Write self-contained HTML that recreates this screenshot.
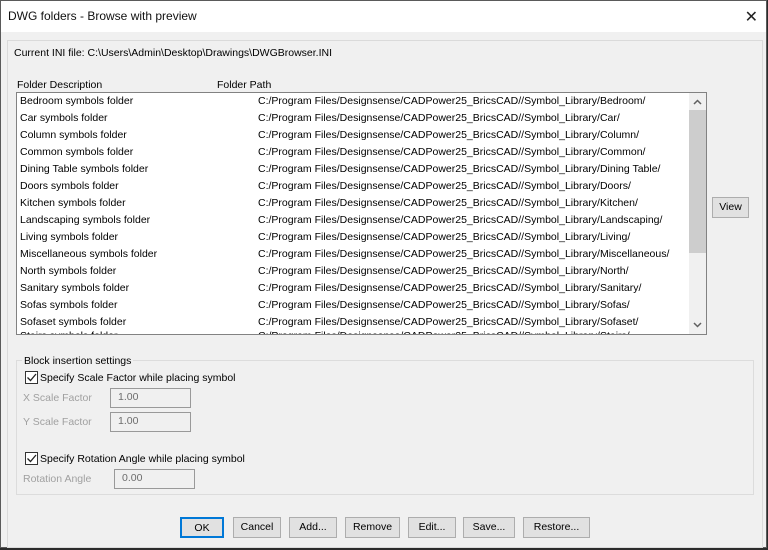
<!DOCTYPE html>
<html><head><style>
*{margin:0;padding:0;box-sizing:border-box}
body{width:768px;height:550px;background:#2b2b2b;font-family:"Liberation Sans",sans-serif;font-size:10.5px;color:#000;position:relative;overflow:hidden}
.win{position:absolute;left:0;top:0;width:767px;height:548px;background:#f0f0f0;border:1px solid #5a5a5a}
.title{position:absolute;left:0;top:0;width:765px;height:31px;background:#fff;font-size:12px;padding:8px 0 0 7px;color:#111}
.x{position:absolute;right:8px;top:6px;font-size:16px;color:#222}
.panel{position:absolute;left:6px;top:39px;width:756px;height:508px;border:1px solid #dadada}
.a{position:absolute;white-space:nowrap}
.list{position:absolute;left:15px;top:91px;width:691px;height:243px;background:#fff;border:1px solid #828282;overflow:hidden}
.row{position:absolute;left:3px;white-space:nowrap}
.row span{position:absolute;left:238px}
.sb{position:absolute;right:0;top:0;width:17px;height:241px;background:#f0f0f0}
.thumb{position:absolute;right:0;top:17px;width:17px;height:143px;background:#cdcdcd}
.btn{position:absolute;top:516px;height:21px;background:#e1e1e1;border:1px solid #adadad;text-align:center;line-height:19px}
.grp{position:absolute;left:15px;top:359px;width:738px;height:135px;border:1px solid #dcdcdc}
.cb{position:absolute;width:13px;height:13px;border:1px solid #333;background:#fff}
.tb{position:absolute;height:20px;border:1px solid #999;background:#f0f0f0;color:#6d6d6d;padding:2px 0 0 7px}
.dis{color:#a0a0a0}
</style></head><body>
<div class="win">
<div class="title">DWG folders - Browse with preview</div>
<div class="x">✕</div>
<div class="panel"></div>
<div class="a" style="left:13px;top:46px">Current INI file: C:\Users\Admin\Desktop\Drawings\DWGBrowser.INI</div>
<div class="a" style="left:16px;top:78px">Folder Description</div>
<div class="a" style="left:216px;top:78px">Folder Path</div>
<div class="list">
<div class="row" style="top:2px">Bedroom symbols folder<span>C:/Program Files/Designsense/CADPower25_BricsCAD//Symbol_Library/Bedroom/</span></div>
<div class="row" style="top:19px">Car symbols folder<span>C:/Program Files/Designsense/CADPower25_BricsCAD//Symbol_Library/Car/</span></div>
<div class="row" style="top:36px">Column symbols folder<span>C:/Program Files/Designsense/CADPower25_BricsCAD//Symbol_Library/Column/</span></div>
<div class="row" style="top:53px">Common symbols folder<span>C:/Program Files/Designsense/CADPower25_BricsCAD//Symbol_Library/Common/</span></div>
<div class="row" style="top:70px">Dining Table symbols folder<span>C:/Program Files/Designsense/CADPower25_BricsCAD//Symbol_Library/Dining Table/</span></div>
<div class="row" style="top:87px">Doors symbols folder<span>C:/Program Files/Designsense/CADPower25_BricsCAD//Symbol_Library/Doors/</span></div>
<div class="row" style="top:104px">Kitchen symbols folder<span>C:/Program Files/Designsense/CADPower25_BricsCAD//Symbol_Library/Kitchen/</span></div>
<div class="row" style="top:121px">Landscaping symbols folder<span>C:/Program Files/Designsense/CADPower25_BricsCAD//Symbol_Library/Landscaping/</span></div>
<div class="row" style="top:138px">Living symbols folder<span>C:/Program Files/Designsense/CADPower25_BricsCAD//Symbol_Library/Living/</span></div>
<div class="row" style="top:155px">Miscellaneous symbols folder<span>C:/Program Files/Designsense/CADPower25_BricsCAD//Symbol_Library/Miscellaneous/</span></div>
<div class="row" style="top:172px">North symbols folder<span>C:/Program Files/Designsense/CADPower25_BricsCAD//Symbol_Library/North/</span></div>
<div class="row" style="top:189px">Sanitary symbols folder<span>C:/Program Files/Designsense/CADPower25_BricsCAD//Symbol_Library/Sanitary/</span></div>
<div class="row" style="top:206px">Sofas symbols folder<span>C:/Program Files/Designsense/CADPower25_BricsCAD//Symbol_Library/Sofas/</span></div>
<div class="row" style="top:223px">Sofaset symbols folder<span>C:/Program Files/Designsense/CADPower25_BricsCAD//Symbol_Library/Sofaset/</span></div>
<div class="row" style="top:237px">Stairs symbols folder<span>C:/Program Files/Designsense/CADPower25_BricsCAD//Symbol_Library/Stairs/</span></div>
<div class="sb"><div class="thumb"></div>
<svg style="position:absolute;left:4px;top:6px" width="9" height="6"><path d="M1 5L4.5 1.5L8 5" stroke="#606060" stroke-width="1.5" fill="none"/></svg>
<svg style="position:absolute;left:4px;top:229px" width="9" height="6"><path d="M1 1L4.5 4.5L8 1" stroke="#606060" stroke-width="1.5" fill="none"/></svg>
</div>
</div>
<div class="btn" style="left:711px;top:196px;width:37px">View</div>
<div class="grp"></div>
<div class="a" style="left:21px;top:354px;background:#f0f0f0;padding:0 2px">Block insertion settings</div>
<div class="cb" style="left:24px;top:370px"><svg width="11" height="11"><path d="M1.5 5.5L4.5 8.5L10 2" stroke="#222" stroke-width="1.3" fill="none"/></svg></div>
<div class="a" style="left:39px;top:371px">Specify Scale Factor while placing symbol</div>
<div class="a dis" style="left:22px;top:391px">X Scale Factor</div>
<div class="tb" style="left:109px;top:387px;width:81px">1.00</div>
<div class="a dis" style="left:22px;top:415px">Y Scale Factor</div>
<div class="tb" style="left:109px;top:411px;width:81px">1.00</div>
<div class="cb" style="left:24px;top:451px"><svg width="11" height="11"><path d="M1.5 5.5L4.5 8.5L10 2" stroke="#222" stroke-width="1.3" fill="none"/></svg></div>
<div class="a" style="left:39px;top:452px">Specify Rotation Angle while placing symbol</div>
<div class="a dis" style="left:22px;top:472px">Rotation Angle</div>
<div class="tb" style="left:113px;top:468px;width:81px">0.00</div>
<div class="btn" style="left:179px;width:44px;border:2px solid #0078d7">OK</div>
<div class="btn" style="left:232px;width:48px">Cancel</div>
<div class="btn" style="left:288px;width:48px">Add...</div>
<div class="btn" style="left:344px;width:55px">Remove</div>
<div class="btn" style="left:407px;width:48px">Edit...</div>
<div class="btn" style="left:462px;width:52px">Save...</div>
<div class="btn" style="left:522px;width:67px">Restore...</div>
</div>
</body></html>
